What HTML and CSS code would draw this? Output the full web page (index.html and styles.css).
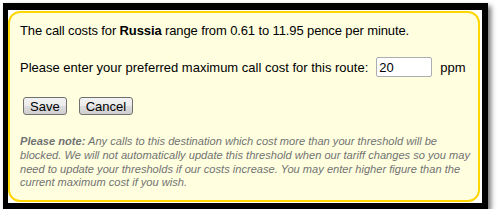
FILE: index.html
```
<!DOCTYPE html>
<html lang="en">
<head>
    <meta charset="UTF-8">
    <title>Call cost threshold</title>
    <link rel="stylesheet" href="styles.css">
</head>
<body>
<div class="frame">
    <div class="panel">
        <p class="intro">The call costs for <b>Russia</b> range from 0.61 to 11.95 pence per minute.</p>
        <p class="limit">
            <label for="maxCost">Please enter your preferred maximum call cost for this route:</label>
            <input type="text" id="maxCost" value="20">
            <span class="unit">ppm</span>
        </p>
        <p class="actions">
            <button type="button">Save</button>
            <button type="button">Cancel</button>
        </p>
        <p class="note"><b>Please note:</b> Any calls to this destination which cost more than your threshold will be<br>
            blocked. We will not automatically update this threshold when our tariff changes so you may<br>
            need to update your thresholds if our costs increase. You may enter higher figure than the<br>
            current maximum cost if you wish.</p>
    </div>
</div>
</body>
</html>
```
FILE: styles.css
```
*{
    margin: 0;
    padding: 0;
    box-sizing: border-box;
}
body{
    background: #fff;
    font-family: "Liberation Sans", Arial, sans-serif;
    font-size: 13px;
    color: #000;
}
.frame{
    width: 485px;
    margin: 3px 0 0 3px;
    border-style: solid;
    border-color: #000;
    border-width: 7px 6px 6px 5px;
    background: #fff;
    padding: 1px 2px 1px 0;
    box-shadow: 3px 3px 5px rgba(0,0,0,0.55);
}
.panel{
    background: #ffffe0;
    border: 2px solid #ffd700;
    border-radius: 12px;
    padding: 10px 10px 10px 10px;
}
.intro{
    line-height: 16px;
    letter-spacing: -0.12px;
}
.limit{
    margin-top: 17px;
    display: flex;
    align-items: center;
    height: 22px;
}
.limit input{
    width: 56px;
    height: 20px;
    margin-left: 8px;
    border: 1px solid #abadb3;
    border-radius: 2px;
    padding: 0 2px;
    font-family: inherit;
    font-size: 13px;
    background: #fff;
}
.unit{
    margin-left: 8px;
}
.actions{
    margin-top: 19px;
    display: flex;
    gap: 12px;
    padding-left: 3px;
}
.actions button{
    height: 18px;
    padding: 0 6px;
    border: 1px solid #707070;
    border-radius: 3px;
    background: linear-gradient(#f2f2f2 0%, #ebebeb 50%, #dddddd 51%, #cfcfcf 100%);
    font-family: inherit;
    font-size: 13px;
    color: #000;
}
.note{
    margin-top: 20px;
    font-size: 11.1px;
    line-height: 13.8px;
    font-style: italic;
    color: #727272;
    white-space: nowrap;
}
```
